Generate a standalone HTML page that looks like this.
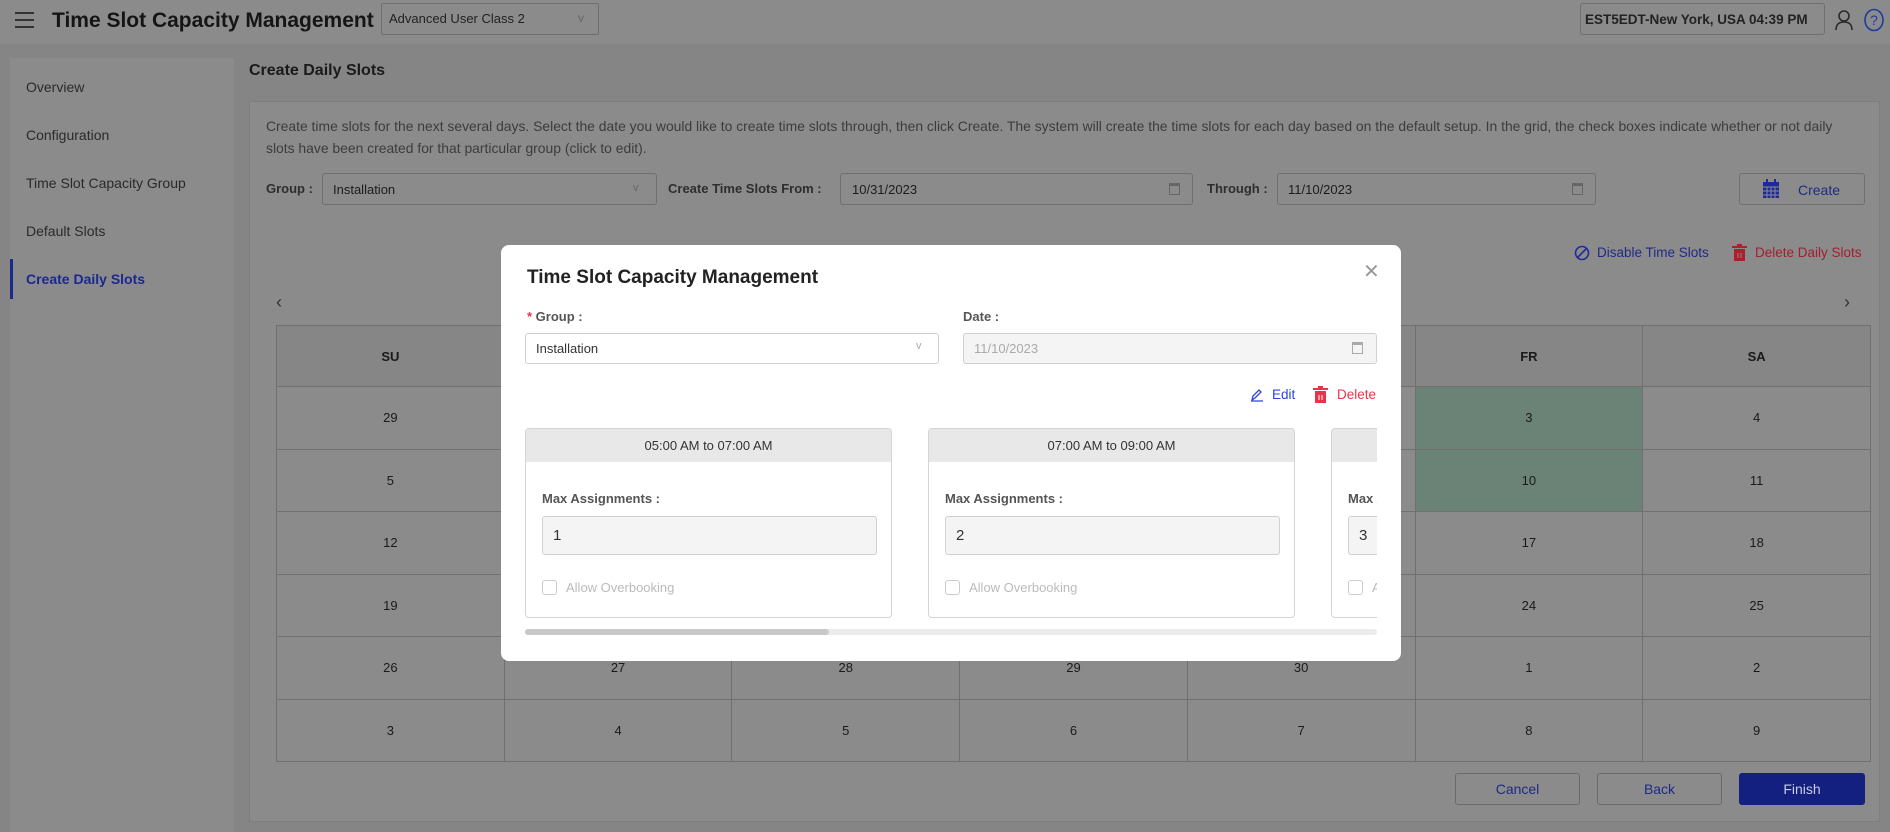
<!DOCTYPE html>
<html><head><meta charset="utf-8"><style>
*{box-sizing:border-box;margin:0;padding:0}
body{width:1890px;height:832px;position:relative;overflow:hidden;background:#858585;font-family:"Liberation Sans",Arial,sans-serif;color:#1c1c1c}
.a{position:absolute}
.hdr{left:0;top:0;width:1890px;height:44px;background:#8b8b8b}
.side{left:10px;top:58px;width:224px;height:774px;background:#8b8b8b}
.side div{position:absolute;left:16px;font-size:14px;color:#2a2a2a}
.panel{left:249px;top:101px;width:1631px;height:721px;background:#8b8b8b;border:1px solid #7e7e7e}
.box{position:absolute;border:1px solid #6f6f6f;border-radius:3px;background:#8b8b8b}
.lbl{position:absolute;font-size:13px;font-weight:bold;color:#2e2e2e}
table{position:absolute;left:276px;top:325px;width:1595px;height:437px;border-collapse:collapse}
td{border:1px solid #707070;text-align:center;font-size:13px;color:#1a1a1a;width:228px}
tr.h td{background:#868686;font-weight:bold;height:61px}
td.g{background:#6b8377}
.modal{left:501px;top:245px;width:900px;height:416px;background:#fff;border-radius:8px}
.m{position:absolute}
.card{position:absolute;top:183px;width:367px;height:190px;border:1px solid #d4d4d4;border-radius:4px;overflow:hidden;background:#fff}
.ch{height:33px;background:#e8e8e8;text-align:center;line-height:33px;font-size:13px;color:#333}
.card .ml{position:absolute;left:16px;top:62px;font-size:13px;font-weight:bold;color:#555}
.card .in{position:absolute;left:16px;top:87px;width:335px;height:39px;background:#f4f4f4;border:1px solid #d0d0d0;border-radius:3px;font-size:15px;line-height:37px;padding-left:10px;color:#333}
.card .cb{position:absolute;left:16px;top:151px;width:15px;height:15px;border:1px solid #ccc;border-radius:3px}
.card .ct{position:absolute;left:40px;top:151px;font-size:13px;color:#bbb}
.btn{position:absolute;top:773px;height:32px;border:1px solid #6a6a6a;border-radius:3px;font-size:14px;text-align:center;line-height:30px;color:#1e2a86}
.cal{position:absolute;width:11px;height:12px;border:1px solid #666;border-top-width:3px}
</style></head><body>
<div class="a hdr"></div>
<div class="a" style="left:15px;top:12px;width:19px;height:2px;background:#333;box-shadow:0 7px 0 #333,0 14px 0 #333"></div>
<div class="a" style="left:52px;top:9px;font-size:21px;font-weight:bold;color:#151515">Time Slot Capacity Management</div>
<div class="box" style="left:381px;top:3px;width:218px;height:32px;border-radius:2px"><span class="a" style="left:7px;top:7px;font-size:13px;color:#222">Advanced User Class 2</span><span class="a" style="left:196px;top:7px;font-size:12px;color:#666">v</span></div>
<div class="box" style="left:1580px;top:3px;width:245px;height:32px"><span class="a" style="left:4px;top:8px;font-size:13.5px;font-weight:bold;color:#222;white-space:nowrap">EST5EDT-New York, USA 04:39 PM</span></div>
<svg class="a" style="left:1834px;top:9px" width="20" height="22" viewBox="0 0 20 22"><circle cx="10" cy="7" r="5" fill="none" stroke="#2a2a2a" stroke-width="1.6"/><path d="M2 21 Q2 13 10 13 Q18 13 18 21" fill="none" stroke="#2a2a2a" stroke-width="1.6"/></svg>
<svg class="a" style="left:1863px;top:8px" width="22" height="24" viewBox="0 0 22 24"><ellipse cx="11" cy="12" rx="9" ry="10.5" fill="none" stroke="#1f3aa0" stroke-width="1.6"/><text x="11" y="17" font-size="14" text-anchor="middle" fill="#1f3aa0" font-family="Liberation Sans">?</text></svg>

<div class="a side">
<div style="top:21px">Overview</div>
<div style="top:69px">Configuration</div>
<div style="top:117px">Time Slot Capacity Group</div>
<div style="top:165px">Default Slots</div>
<div style="top:213px;color:#1a2890;font-weight:bold">Create Daily Slots</div>
</div>
<div class="a" style="left:10px;top:259px;width:3px;height:40px;background:#1c2a8e"></div>

<div class="a" style="left:249px;top:62px;font-size:16px;font-weight:bold;color:#1a1a1a">Create Daily Slots</div>
<div class="a panel"></div>
<div class="a" style="left:266px;top:115px;font-size:13.9px;line-height:22px;color:#3c3c3c;white-space:nowrap">Create time slots for the next several days. Select the date you would like to create time slots through, then click Create. The system will create the time slots for each day based on the default setup. In the grid, the check boxes indicate whether or not daily<br>slots have been created for that particular group (click to edit).</div>
<div class="lbl" style="left:266px;top:181px">Group :</div>
<div class="box" style="left:322px;top:173px;width:335px;height:32px"><span class="a" style="left:10px;top:8px;font-size:13px">Installation</span><span class="a" style="left:310px;top:8px;font-size:11px;color:#666">v</span></div>
<div class="lbl" style="left:668px;top:181px">Create Time Slots From :</div>
<div class="box" style="left:840px;top:173px;width:353px;height:32px"><span class="a" style="left:11px;top:8px;font-size:13px">10/31/2023</span><span class="cal" style="left:328px;top:9px"></span></div>
<div class="lbl" style="left:1207px;top:181px">Through :</div>
<div class="box" style="left:1277px;top:173px;width:319px;height:32px"><span class="a" style="left:10px;top:8px;font-size:13px">11/10/2023</span><span class="cal" style="left:294px;top:9px"></span></div>
<div class="box" style="left:1739px;top:173px;width:126px;height:32px">
<svg class="a" style="left:22px;top:5px" width="18" height="20" viewBox="0 0 18 20"><rect x="1" y="3" width="16" height="16" fill="#1e2a9a"/><g stroke="#8b8b8b" stroke-width="1"><path d="M1 8H17M1 12H17M1 16H17M5 8V19M9 8V19M13 8V19"/></g><rect x="4" y="0" width="2" height="5" fill="#1e2a9a"/><rect x="12" y="0" width="2" height="5" fill="#1e2a9a"/></svg>
<span class="a" style="left:58px;top:8px;font-size:14px;color:#1e2a86">Create</span></div>
<svg class="a" style="left:1574px;top:245px" width="16" height="16" viewBox="0 0 16 16"><circle cx="8" cy="8" r="6.5" fill="none" stroke="#1e2a9a" stroke-width="1.6"/><path d="M4 12L12 4" stroke="#1e2a9a" stroke-width="1.6"/></svg>
<div class="a" style="left:1597px;top:245px;font-size:13.5px;color:#1e2a86">Disable Time Slots</div>
<svg class="a" style="left:1732px;top:244px" width="15" height="17" viewBox="0 0 15 17"><rect x="0" y="2" width="15" height="2" fill="#a8222e"/><rect x="5" y="0" width="5" height="3" fill="#a8222e"/><rect x="2" y="5" width="11" height="12" fill="#a8222e"/><path d="M6 9v5M9 9v5" stroke="#8b8b8b"/></svg>
<div class="a" style="left:1755px;top:245px;font-size:13.5px;color:#a31f2c">Delete Daily Slots</div>
<div class="a" style="left:276px;top:292px;font-size:18px;color:#333">&#8249;</div>
<div class="a" style="left:1844px;top:292px;font-size:18px;color:#333">&#8250;</div>

<table>
<tr class="h"><td>SU</td><td>MO</td><td>TU</td><td>WE</td><td>TH</td><td>FR</td><td>SA</td></tr>
<tr><td>29</td><td>30</td><td>31</td><td>1</td><td>2</td><td class="g">3</td><td>4</td></tr>
<tr><td>5</td><td>6</td><td>7</td><td>8</td><td>9</td><td class="g">10</td><td>11</td></tr>
<tr><td>12</td><td>13</td><td>14</td><td>15</td><td>16</td><td>17</td><td>18</td></tr>
<tr><td>19</td><td>20</td><td>21</td><td>22</td><td>23</td><td>24</td><td>25</td></tr>
<tr><td>26</td><td>27</td><td>28</td><td>29</td><td>30</td><td>1</td><td>2</td></tr>
<tr><td>3</td><td>4</td><td>5</td><td>6</td><td>7</td><td>8</td><td>9</td></tr>
</table>

<div class="btn" style="left:1455px;width:125px">Cancel</div>
<div class="btn" style="left:1597px;width:125px">Back</div>
<div class="btn" style="left:1739px;width:126px;background:#13207f;border-color:#13207f;color:#c8cce6">Finish</div>

<div class="a modal">
<div class="m" style="left:26px;top:22px;font-size:19px;font-weight:bold;color:#222">Time Slot Capacity Management</div>
<div class="m" style="left:862px;top:14px;font-size:20px;color:#999;font-weight:300">&#x2715;</div>
<div class="m" style="left:26px;top:64px;font-size:13px;font-weight:bold;color:#555"><span style="color:#e8344a">*</span> Group :</div>
<div class="m" style="left:24px;top:88px;width:414px;height:31px;border:1px solid #d0d0d0;border-radius:3px"><span class="a" style="left:10px;top:7px;font-size:13px;color:#333">Installation</span><span class="a" style="left:390px;top:6px;font-size:11px;color:#aaa">v</span></div>
<div class="m" style="left:462px;top:64px;font-size:13px;font-weight:bold;color:#555">Date :</div>
<div class="m" style="left:462px;top:88px;width:414px;height:31px;border:1px solid #d0d0d0;border-radius:3px;background:#f4f4f4"><span class="a" style="left:10px;top:7px;font-size:13px;color:#aaa">11/10/2023</span><span class="cal" style="left:388px;top:8px;border-color:#aaa"></span></div>
<svg class="m" style="left:749px;top:143px" width="14" height="14" viewBox="0 0 14 14"><path d="M2 12L3 8L9 2L11 4L5 10Z M1 13H13" fill="none" stroke="#2b44e0" stroke-width="1.3"/></svg>
<div class="m" style="left:771px;top:142px;font-size:13.5px;color:#2b44e0">Edit</div>
<svg class="m" style="left:812px;top:141px" width="15" height="17" viewBox="0 0 15 17"><rect x="0" y="2" width="15" height="2" fill="#e8344a"/><rect x="5" y="0" width="5" height="3" fill="#e8344a"/><rect x="2" y="5" width="11" height="12" fill="#e8344a"/><path d="M6 9v5M9 9v5" stroke="#fff"/></svg>
<div class="m" style="left:836px;top:142px;font-size:13.5px;color:#e8344a">Delete</div>
<div class="m" style="left:24px;top:0;width:852px;height:416px;overflow:hidden">
<div class="card" style="left:0"><div class="ch">05:00 AM to 07:00 AM</div><div class="ml">Max Assignments :</div><div class="in">1</div><div class="cb"></div><div class="ct">Allow Overbooking</div></div>
<div class="card" style="left:403px"><div class="ch">07:00 AM to 09:00 AM</div><div class="ml">Max Assignments :</div><div class="in">2</div><div class="cb"></div><div class="ct">Allow Overbooking</div></div>
<div class="card" style="left:806px"><div class="ch">09:00 AM to 11:00 AM</div><div class="ml">Max Assignments :</div><div class="in">3</div><div class="cb"></div><div class="ct">Allow Overbooking</div></div>
<div class="m" style="left:0;top:384px;width:852px;height:6px;background:#ececec;border-radius:3px"></div>
<div class="m" style="left:0;top:384px;width:304px;height:6px;background:#c8c8c8;border-radius:3px"></div>
</div>
</div>
</body></html>
